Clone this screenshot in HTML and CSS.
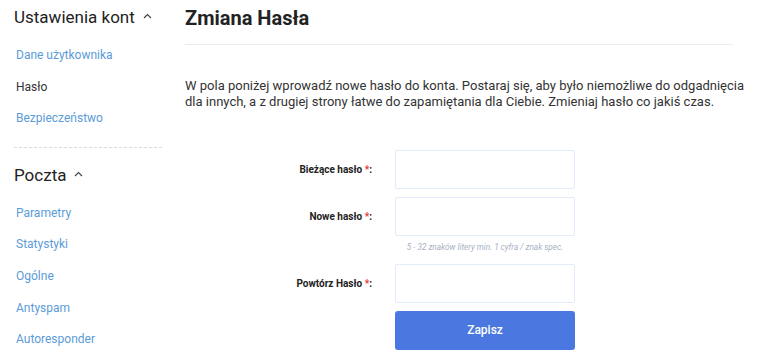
FILE: index.html
```html
<!DOCTYPE html>
<html lang="pl">
<head>
<meta charset="utf-8">
<title>Zmiana Hasła</title>
<link rel="stylesheet" href="styles.css">
</head>
<body>
<div class="page">
  <aside class="sidebar">
    <div class="sec-title">Ustawienia kont
      <svg class="chev" width="9" height="6" viewBox="0 0 9 6"><path d="M1 5 L4.5 1.5 L8 5" fill="none" stroke="#444" stroke-width="1.2"/></svg>
    </div>
    <ul class="links">
      <li><a class="link" href="#">Dane użytkownika</a></li>
      <li><span class="link active">Hasło</span></li>
      <li><a class="link" href="#">Bezpieczeństwo</a></li>
    </ul>
    <div class="divider"></div>
    <div class="sec-title sec-two">Poczta
      <svg class="chev" width="9" height="6" viewBox="0 0 9 6"><path d="M1 5 L4.5 1.5 L8 5" fill="none" stroke="#444" stroke-width="1.2"/></svg>
    </div>
    <ul class="links">
      <li><a class="link" href="#">Parametry</a></li>
      <li><a class="link" href="#">Statystyki</a></li>
      <li><a class="link" href="#">Ogólne</a></li>
      <li><a class="link" href="#">Antyspam</a></li>
      <li><a class="link" href="#">Autoresponder</a></li>
    </ul>
  </aside>
  <main class="main">
    <h1 class="title">Zmiana Hasła</h1>
    <p class="intro">W pola poniżej wprowadź nowe hasło do konta. Postaraj się, aby było niemożliwe do odgadnięcia dla innych, a z drugiej strony łatwe do zapamiętania dla Ciebie. Zmieniaj hasło co jakiś czas.</p>
    <form class="form">
      <label class="label" for="cur">Bieżące hasło <span class="req">*</span>:</label>
      <input class="input" id="cur" type="password">
      <label class="label" for="new">Nowe hasło <span class="req">*</span>:</label>
      <div class="field">
        <input class="input" id="new" type="password">
        <div class="hint">5 - 32 znaków litery min. 1 cyfra / znak spec.</div>
      </div>
      <label class="label" for="rep">Powtórz Hasło <span class="req">*</span>:</label>
      <input class="input" id="rep" type="password">
      <div></div>
      <button class="btn" type="button">Zapisz</button>
    </form>
  </main>
</div>
</body>
</html>
```
FILE: styles.css
```css
* { box-sizing: border-box; }
body {
  margin: 0;
  font-family: Roboto, "Liberation Sans", Arial, sans-serif;
  color: #333;
  background: #fff;
}
.page {
  display: flex;
  gap: 23px;
  padding-left: 14px;
}
.sidebar {
  width: 148px;
  flex: none;
  padding-top: 5px;
}
.sec-title {
  font-size: 17px;
  line-height: 24px;
  color: #222;
  display: flex;
  align-items: center;
  gap: 8px;
}
.chev { display: block; margin-top: -2px; }
.links {
  list-style: none;
  margin: 11px 0 0;
  padding: 0 0 0 2px;
}
.links li {
  height: 31.6px;
  line-height: 31.6px;
  font-size: 12px;
}
.link {
  color: #5b9bd8;
  text-decoration: none;
}
.link.active { color: #333; }
.divider {
  margin-top: 12px;
  height: 0;
  border-top: 1px dashed #dcdcdc;
}
.sec-two { margin-top: 15px; }
.main {
  width: 548px;
  flex: none;
  padding-top: 6px;
}
.title {
  margin: 0;
  font-size: 20px;
  line-height: 24px;
  font-weight: 700;
  color: #222;
  padding-bottom: 14px;
  border-bottom: 1px solid #ececec;
}
.intro {
  width: 578px;
  margin: 32.5px 0 0;
  font-size: 13px;
  line-height: 16.5px;
  color: #333;
}
.form {
  margin-top: 39px;
  display: grid;
  grid-template-columns: 187px 180px;
  column-gap: 23px;
  row-gap: 8px;
  align-items: start;
}
.label {
  height: 39px;
  line-height: 39px;
  text-align: right;
  font-size: 10px;
  font-weight: 700;
  color: #222;
}
.req { color: #e53935; }
.input {
  display: block;
  width: 180px;
  height: 39px;
  border: 1px solid #e3eafa;
  border-radius: 2px;
  background: #fff;
  outline: none;
  margin: 0;
}
.field { margin-bottom: 3px; }
.hint {
  margin-top: 5px;
  text-align: center;
  font-size: 8.2px;
  line-height: 12px;
  font-style: italic;
  color: #a9b1c4;
}
.btn {
  display: block;
  width: 180px;
  height: 39px;
  border: none;
  border-radius: 3px;
  background: #4a78e0;
  color: #fff;
  font-family: Roboto, "Liberation Sans", Arial, sans-serif;
  font-size: 12px;
  font-weight: 500;
  margin: 0;
}
```
